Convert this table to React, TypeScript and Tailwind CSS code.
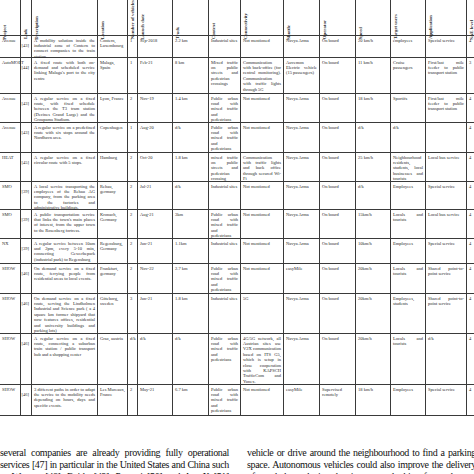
import React from "react";

type Row = { h: string; c: string[] };

const headers = [
  "Project",
  "Link",
  "Description",
  "Location",
  "Number of vehicles",
  "Launch date",
  "Track",
  "Context",
  "Connectivity",
  "Shuttle",
  "Operator",
  "Speed",
  "Target users",
  "Application",
  "SAE level",
];

const mixedRoad = "Public urban road with mixed traffic and pedestrians";
const feeder = "First/last mile feeder to public transport station";

const rows: Row[] = [
  {
    h: "h-[22px]",
    c: ["Avenue", "[43]", "A mobility solution inside the industrial zone of Contern to connect companies to the train station.", "Contern, Luxembourg", "1", "Sep-2018", "2.2 km", "Industrial sites", "Not mentioned", "Navya Arma", "On board", "20 km/h", "employees", "Special service", "4"],
  },
  {
    h: "h-[36px]",
    c: ["AutoMOET", "[44]", "A fixed route with both on-demand and scheduled service linking Malaga's port to the city centre", "Malaga, Spain", "1", "Feb-21", "8 km", "Mixed traffic on public streets and pedestrian crossings", "Communication with back-office (for central monitoring). Communication with traffic lights through 5G", "Auvemon Electric vehicle (15 passengers)", "On board", "11 km/h", "Cruise passengers", feeder, "3"],
  },
  {
    h: "h-[29px]",
    c: ["Avenue", "[43]", "A regular service on a fixed route, with fixed schedule between the T3 tram station (Decines Grand Large) and the Groupama Stadium.", "Lyon, France", "2", "Nov-19", "1.4 km", mixedRoad, "Not mentioned", "Navya Arma", "On board", "18 km/h", "Sportifs", feeder, "4"],
  },
  {
    h: "h-[30px]",
    c: ["Avenue", "[43]", "A regular service on a predefined route with six stops around the Nordhavn area.", "Copenhagen", "1", "Aug-20", "d/k", mixedRoad, "Not mentioned", "Navya Arma", "On board", "d/k", "d/k", "", "4"],
  },
  {
    h: "h-[29px]",
    c: ["HEAT", "[45]", "A regular service on a fixed circular route with 5 stops.", "Hamburg", "2", "Oct-20", "1.8 km", "mixed traffic on public streets and pedestrian crossing", "Communication with traffic lights and back office through secured Wi-Fi", "Navya Arma", "On board", "25 km/h", "Neighbourhood residents, students, local businesses and tourists", "Local bus service", "4"],
  },
  {
    h: "h-[28px]",
    c: ["SMO", "[39]", "A local service transporting the employees of the Rehau AG company, from the parking area to the factories and administrative buildings.", "Rehau, germany", "2", "Jul-21", "d/k", "Industrial sites", "Not mentioned", "Navya Arma", "On board", "d/k", "Employees", "Special service", "4"],
  },
  {
    h: "h-[29px]",
    c: ["SMO", "[39]", "A public transportation service that links the town's main places of interest, from the upper town to the Rosenberg fortress.", "Kronach, Germany", "2", "Aug-21", "3km", mixedRoad, "Not mentioned", "Navya Arma", "On board", "15km/h", "Locals and tourists", "Local bus service", "4"],
  },
  {
    h: "h-[25px]",
    c: ["NX", "[39]", "A regular service between 10am and 2pm, every 5-10 min, connecting Gewerbepark (industrial park) to Regensburg", "Regensburg, Germany", "2", "Jun-21", "1.1km", "Industrial sites", "Not mentioned", "Navya Arma", "On board", "10km/h", "Employees", "Special service", "4"],
  },
  {
    h: "h-[30px]",
    c: ["SHOW", "[46]", "On demand service on a fixed route, ferrying people from residential areas to local events.", "Frankfurt, germany", "2", "Nov-22", "2.7 km", mixedRoad, "Not mentioned", "easyMile", "On board", "20km/h", "Locals and tourists", "Shared point-to-point service", "4"],
  },
  {
    h: "h-[40px]",
    c: ["SHOW", "[46]", "On demand service on a fixed route, serving the Lindholmen Industrial and Science park ( a 4 square km former shipyard that now features offices, residential and university buildings and parking lots)", "Göteborg, sweden", "3", "Jun-21", "1.8 km", "Industrial sites", "5G", "Navya Arma", "On board", "20km/h", "Employees, students", "Shared point-to-point service", "4"],
  },
  {
    h: "h-[51px]",
    c: ["SHOW", "[46]", "A regular service on a fixed route, connecting a suburban train station / public transport hub and a shopping center", "Graz, austria", "d/k", "d/k", "d/k", mixedRoad, "4G/5G network, all Austrian sites use V2X communication based on ITS G5, which is setup in close cooperation with KAPSCH TrafficCom and Yunex.", "Navya Arma", "On board", "20km/h", "Locals and tourists", "d/k", "4"],
  },
  {
    h: "h-[31px]",
    c: ["SHOW", "[46]", "3 different paths in order to adapt the service to the mobility needs depending on hours, days and specific events.", "Les Mureaux, France", "2", "May-21", "6.7 km", mixedRoad, "Not mentioned", "easyMile", "Supervised remotely", "18 km/h", "Employees", "Special service", "4"],
  },
];

const gridCols =
  "grid grid-cols-[21px_11px_66px_30px_10px_35px_36px_32px_43px_36px_36px_35px_35px_41px_20px]";

function Cell({ text, i }: { text: string; i: number }) {
  if (i === 0) {
    return (
      <div className="border-r border-[#3a3a3a] pl-[2px] pt-[1.5px] whitespace-nowrap">
        {text}
      </div>
    );
  }
  if (i === 1) {
    return (
      <div className="border-r border-[#3a3a3a] pr-[2px] pt-[7px] text-right">
        {text}
      </div>
    );
  }
  if (i === 4) {
    return (
      <div className="border-r border-[#3a3a3a] pl-[2px] pt-[1.5px] whitespace-nowrap">
        {text}
      </div>
    );
  }
  return (
    <div className="border-r border-[#3a3a3a] px-[2px] pt-[1.5px] text-justify break-words">
      {text}
    </div>
  );
}

function Line({ children }: { children: React.ReactNode }) {
  return <div className="text-justify [text-align-last:justify]">{children}</div>;
}

export default function App() {
  return (
    <div className="w-[474px] h-[474px] overflow-hidden bg-white text-[#111] font-['Liberation_Serif','Times_New_Roman',serif]">
      {/* table */}
      <div className="w-[487px] text-[4.5px] leading-[5.4px] text-[#2a2a2a]">
        <div className={`${gridCols} h-[36px] border-b border-[#3a3a3a]`}>
          {headers.map((h) => (
            <div
              key={h}
              className="flex items-end border-r border-[#3a3a3a] pl-[2px] pb-[3px]"
            >
              <span className="[writing-mode:vertical-rl] rotate-180 whitespace-nowrap font-bold text-[4.8px]">
                {h}
              </span>
            </div>
          ))}
        </div>
        {rows.map((r, ri) => (
          <div key={ri} className={`${gridCols} ${r.h} border-b border-[#3a3a3a]`}>
            {r.c.map((t, i) => (
              <Cell key={i} text={t} i={i} />
            ))}
          </div>
        ))}
      </div>

      {/* body text below the table */}
      <div className="mt-[31px] flex gap-[18px] text-[10px] leading-[12px] tracking-[-0.35px]">
        <div className="w-[229px] shrink-0">
          <Line>several companies are already providing fully operational</Line>
          <Line>services [47] in particular in the United States and China such</Line>
          <Line>as Waymo [48], Baidu [49], Pony.ai [50] and AutoX [51] which</Line>
        </div>
        <div className="w-[229px] shrink-0">
          <Line>vehicle or drive around the neighbourhood to find a parking</Line>
          <Line>space. Autonomous vehicles could also improve the delivery</Line>
          <Line>of goods by reducing the time spent looking for a place to</Line>
        </div>
      </div>
    </div>
  );
}
